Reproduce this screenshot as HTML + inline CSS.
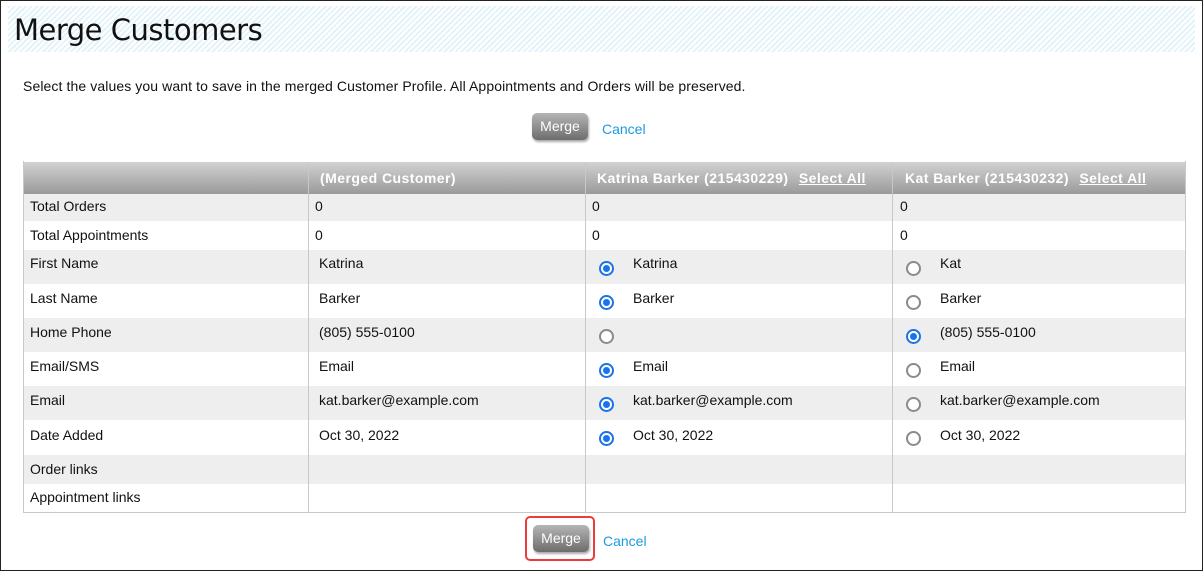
<!DOCTYPE html>
<html><head><meta charset="utf-8"><style>
*{margin:0;padding:0;box-sizing:border-box}
body{width:1203px;height:571px;overflow:hidden;background:#fff;font-family:"Liberation Sans",Arial,sans-serif;font-size:14px;color:#111;position:relative}
.frame{position:absolute;left:0;top:0;width:1203px;height:571px;border:1px solid #222}
.hdr{position:absolute;left:8px;top:6px;width:1187px;height:46px;background:repeating-linear-gradient(135deg,#e4f3fa 0 2px,#fff 2px 4px)}
.hdr h1{font-family:"DejaVu Sans","Liberation Sans",sans-serif;font-weight:normal;font-size:29px;position:absolute;left:6px;top:7px;color:#111;letter-spacing:-0.5px}
.abs{position:absolute;white-space:nowrap;margin-top:-1px}
.btn{position:absolute;width:56px;height:27px;border-radius:5px;background:linear-gradient(#b5b5b5,#6d6d6d);color:#fff;font-size:14px;text-align:center;line-height:26px;box-shadow:1px 2px 2px #aaa}
.cancel{position:absolute;color:#1a9be0;font-size:14px}
.row{position:absolute;left:24px;width:1162px}
.th{position:absolute;top:162px;height:32px;left:24px;width:1162px;background:linear-gradient(#d2d2d2,#9a9a9a)}
.th span{position:absolute;top:8px;color:#fff;font-weight:bold;font-size:14px;white-space:nowrap;letter-spacing:0.45px}
.th u{margin-left:6px}
.vl{position:absolute;width:1px;background:#c8c8c8}
.rad{position:absolute;width:15px;height:15px;border-radius:50%;border:2px solid #8a8a8f;background:#fff}
.rad.on{border-color:#1a73e8}
.rad.on::after{content:"";position:absolute;left:2px;top:2px;width:7px;height:7px;border-radius:50%;background:#1a73e8}
</style></head><body>
<div class="frame"></div>
<div class="hdr"><h1>Merge Customers</h1></div>
<div class="abs" style="left:23px;top:79px;letter-spacing:0.1px">Select the values you want to save in the merged Customer Profile. All Appointments and Orders will be preserved.</div>
<div class="btn" style="left:532px;top:113px">Merge</div>
<div class="cancel" style="left:602px;top:121px">Cancel</div>

<div class="th"><span style="left:296px">(Merged Customer)</span><span style="left:573px">Katrina Barker (215430229) <u>Select All</u></span><span style="left:881px">Kat Barker (215430232) <u>Select All</u></span></div>

<div class="row" style="top:194px;height:27px;background:#eee"></div>
<div class="row" style="top:250px;height:34px;background:#eee"></div>
<div class="row" style="top:318px;height:34px;background:#eee"></div>
<div class="row" style="top:386px;height:34px;background:#eee"></div>
<div class="row" style="top:455px;height:29px;background:#eee"></div>
<div style="position:absolute;left:23px;top:161px;width:1163px;height:352px;border:1px solid #c8c8c8;border-top:none"></div>
<div class="vl" style="left:308px;top:162px;height:350px"></div>
<div class="vl" style="left:585px;top:162px;height:350px"></div>
<div class="vl" style="left:892px;top:162px;height:350px"></div>

<div class="abs" style="left:30px;top:199px">Total Orders</div><div class="abs" style="left:315px;top:199px">0</div><div class="abs" style="left:592px;top:199px">0</div><div class="abs" style="left:900px;top:199px">0</div>
<div class="abs" style="left:30px;top:228px">Total Appointments</div><div class="abs" style="left:315px;top:228px">0</div><div class="abs" style="left:592px;top:228px">0</div><div class="abs" style="left:900px;top:228px">0</div>

<div class="abs" style="left:30px;top:256px">First Name</div><div class="abs" style="left:319px;top:256px">Katrina</div><div class="rad on" style="left:599px;top:261px"></div><div class="abs" style="left:633px;top:256px">Katrina</div><div class="rad" style="left:906px;top:261px"></div><div class="abs" style="left:940px;top:256px">Kat</div>
<div class="abs" style="left:30px;top:291px">Last Name</div><div class="abs" style="left:319px;top:291px">Barker</div><div class="rad on" style="left:599px;top:295px"></div><div class="abs" style="left:633px;top:291px">Barker</div><div class="rad" style="left:906px;top:295px"></div><div class="abs" style="left:940px;top:291px">Barker</div>
<div class="abs" style="left:30px;top:325px">Home Phone</div><div class="abs" style="left:319px;top:325px">(805) 555-0100</div><div class="rad" style="left:599px;top:329px"></div><div class="rad on" style="left:906px;top:329px"></div><div class="abs" style="left:940px;top:325px">(805) 555-0100</div>
<div class="abs" style="left:30px;top:359px">Email/SMS</div><div class="abs" style="left:319px;top:359px">Email</div><div class="rad on" style="left:599px;top:363px"></div><div class="abs" style="left:633px;top:359px">Email</div><div class="rad" style="left:906px;top:363px"></div><div class="abs" style="left:940px;top:359px">Email</div>
<div class="abs" style="left:30px;top:393px">Email</div><div class="abs" style="left:319px;top:393px">kat.barker@example.com</div><div class="rad on" style="left:599px;top:397px"></div><div class="abs" style="left:633px;top:393px">kat.barker@example.com</div><div class="rad" style="left:906px;top:397px"></div><div class="abs" style="left:940px;top:393px">kat.barker@example.com</div>
<div class="abs" style="left:30px;top:428px">Date Added</div><div class="abs" style="left:319px;top:428px">Oct 30, 2022</div><div class="rad on" style="left:599px;top:431px"></div><div class="abs" style="left:633px;top:428px">Oct 30, 2022</div><div class="rad" style="left:906px;top:431px"></div><div class="abs" style="left:940px;top:428px">Oct 30, 2022</div>
<div class="abs" style="left:30px;top:462px">Order links</div>
<div class="abs" style="left:30px;top:490px">Appointment links</div>

<div style="position:absolute;left:525px;top:516px;width:70px;height:45px;border:2px solid #f03a3a;border-radius:5px"></div>
<div class="btn" style="left:533px;top:525px">Merge</div>
<div class="cancel" style="left:603px;top:533px">Cancel</div>
</body></html>
